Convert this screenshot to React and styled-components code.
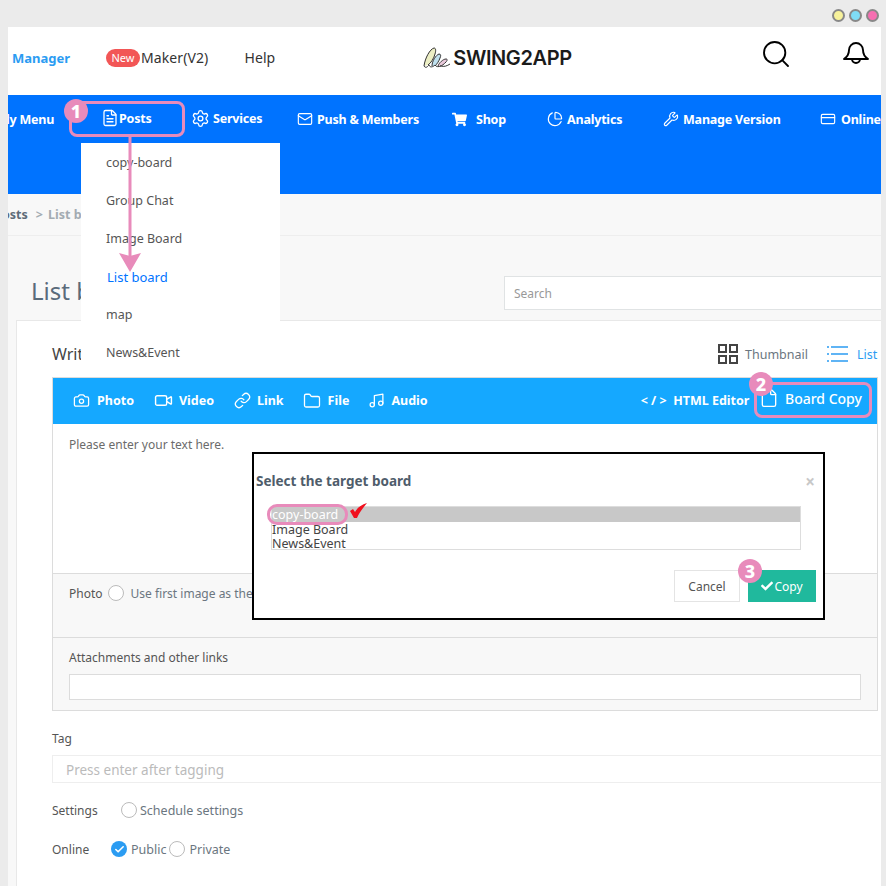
import styled, { createGlobalStyle } from "styled-components";
import {
  Search,
  FileText,
  Settings,
  Mail,
  PieChart,
  Wrench,
  CreditCard,
  Camera,
  Video,
  Link as LinkIcon,
  Folder,
  Music,
  Check,
  File,
} from "lucide-react";
import { FaCheck, FaShoppingCart } from "react-icons/fa";

const Global = createGlobalStyle`
  * { box-sizing: border-box; }
  html, body { margin: 0; padding: 0; background: #ebebeb; }
  body { font-family: "Noto Sans", "Open Sans", sans-serif; overflow: hidden; }
`;

const Frame = styled.div`
  position: relative;
  width: 886px;
  height: 886px;
  overflow: hidden;
  background: #ebebeb;
`;
const TitleBar = styled.div`
  height: 27px;
  display: flex;
  justify-content: flex-end;
  align-items: flex-start;
  gap: 4px;
  padding: 9px 7px 0 0;
`;
const Dot = styled.span`
  width: 13px;
  height: 13px;
  border-radius: 50%;
  border: 2px solid #888;
  background: ${(p) => p.$color};
`;
const Page = styled.div`
  margin: 0 5px 0 8px;
  height: 859px;
  background: #f8f8f8;
  overflow: hidden;
`;
const Header = styled.div`
  height: 68px;
  background: #fff;
  display: flex;
  align-items: center;
  padding: 0 0 7px 4px;
`;
const ManagerLink = styled.span`
  font-size: 13px;
  font-weight: 700;
  color: #2b9cf2;
  width: 94px;
`;
const NewBadge = styled.span`
  width: 34px;
  height: 18px;
  margin-right: 1px;
  border-radius: 9px;
  background: #f25656;
  color: #fff;
  font-size: 11px;
  display: flex;
  align-items: center;
  justify-content: center;
`;
const HeaderLink = styled.span`
  font-size: 14px;
  letter-spacing: 0.1px;
  color: #333;
  margin-left: ${(p) => p.$left || 0}px;
`;
const LogoWrap = styled.div`
  margin-left: 148px;
  display: flex;
  align-items: center;
  gap: 2px;
`;
const LogoText = styled.span`
  font-family: "Inter", sans-serif;
  font-size: 20px;
  font-weight: 600;
  letter-spacing: -0.4px;
  color: #1b1b1b;
`;
const HeaderIcons = styled.div`
  margin-left: auto;
  display: flex;
  align-items: center;
  gap: 51px;
  padding-right: 12px;
  margin-top: -7px;
  color: #000;
`;
const NavBar = styled.div`
  height: 99px;
  background: #0073ff;
  display: flex;
  align-items: flex-start;
  padding-top: 14px;
  overflow: hidden;
  white-space: nowrap;
`;
const NavItem = styled.div`
  display: flex;
  align-items: center;
  gap: ${(p) => p.$gap ?? 4}px;
  color: #fff;
  font-size: 12.5px;
  letter-spacing: -0.2px;
  font-weight: 700;
  flex: none;
  width: ${(p) => p.$width}px;
  margin-top: ${(p) => p.$top || 0}px;
  height: 20px;
  svg {
    margin-left: ${(p) => p.$iconLeft || 0}px;
  }
`;
const MenuCut = styled.span`
  margin-left: -2px;
`;
const Crumbs = styled.div`
  height: 42px;
  border-bottom: 1px solid #eeeeee;
  display: flex;
  align-items: center;
  font-size: 12.5px;
  font-weight: 700;
  color: #5d6b78;
  gap: 8px;
  padding-bottom: 1px;
  overflow: hidden;
`;
const CrumbCurrent = styled.span`
  color: #a3abb2;
  margin-left: ${(p) => p.$pull || 0}px;
`;
const CrumbFirst = styled.span`
  margin-left: -6px;
`;
const TitleRow = styled.div`
  height: 84px;
  display: flex;
  align-items: flex-start;
  padding: 40px 0 0 23px;
`;
const PageTitle = styled.h1`
  margin: 0;
  font-size: 24px;
  line-height: 30px;
  font-weight: 400;
  color: #5a6b7b;
  width: 473px;
`;
const SearchBox = styled.div`
  flex: 1;
  height: 34px;
  background: #fff;
  border: 1px solid #e0e3e4;
  border-right: none;
  font-size: 12px;
  color: #999;
  display: flex;
  align-items: center;
  padding-left: 9px;
`;
const Card = styled.div`
  margin-left: 8px;
  background: #fff;
  border: 1px solid #e8e8e8;
  border-right: none;
  height: 600px;
  padding: 0 0 0 35px;
`;
const WriteRow = styled.div`
  height: 56px;
  display: flex;
  align-items: center;
  padding-top: 10px;
`;
const WriteTitle = styled.span`
  font-size: 16px;
  color: #444;
  width: 666px;
`;
const ViewOption = styled.span`
  display: flex;
  align-items: center;
  gap: ${(p) => p.$gap || 7}px;
  font-size: 12.5px;
  color: ${(p) => p.$color};
  margin-right: ${(p) => p.$right || 0}px;
`;
const Editor = styled.div`
  width: 826px;
  border: 1px solid #dcdcdc;
  background: #f8f8f8;
`;
const Toolbar = styled.div`
  height: 46px;
  background: #15a8ff;
  display: flex;
  align-items: center;
  padding: 0 0 1px 20px;
  color: #fff;
  font-size: 12.5px;
  font-weight: 700;
`;
const ToolItem = styled.span`
  display: flex;
  align-items: center;
  gap: ${(p) => p.$gap || 7}px;
  margin-right: ${(p) => p.$right ?? 20}px;
`;
const TextArea = styled.div`
  height: 150px;
  background: #fff;
  padding: 12px 16px;
  font-size: 12px;
  color: #6b6b6b;
  border-bottom: 1px solid #dcdcdc;
`;
const PhotoRow = styled.div`
  height: 64px;
  display: flex;
  align-items: flex-start;
  padding: 11px 16px;
  font-size: 12px;
  color: #6b7680;
  border-bottom: 1px solid #dcdcdc;
  overflow: hidden;
`;
const PhotoLabel = styled.span`
  color: #555;
  margin-right: 5px;
`;
const Radio = styled.span`
  width: 16px;
  height: 16px;
  flex: none;
  border-radius: 50%;
  border: 1px solid #bbb;
  background: #fff;
  margin: ${(p) => p.$margin || "0"};
`;
const LinksBox = styled.div`
  height: 72px;
  padding: 11px 16px 0;
  font-size: 12px;
  color: #555;
`;
const LinksInput = styled.div`
  height: 26px;
  margin-top: 8px;
  background: #fff;
  border: 1px solid #dcdcdc;
`;
const TagLabel = styled.div`
  font-size: 12px;
  color: #555;
  margin-top: 19px;
`;
const TagInput = styled.div`
  height: 28px;
  margin-top: 8px;
  border: 1px solid #eeeeee;
  border-right: none;
  font-size: 13.5px;
  color: #bbb;
  display: flex;
  align-items: center;
  padding: 1px 0 0 13px;
`;
const OptionRow = styled.div`
  display: flex;
  align-items: center;
  font-size: 12.5px;
  color: #6b7680;
  height: 18px;
  margin-top: ${(p) => p.$top}px;
`;
const OptionLabel = styled.span`
  color: #555;
  font-size: 12px;
  width: ${(p) => p.$width}px;
`;
const CheckedRadio = styled.span`
  width: 16px;
  height: 16px;
  border-radius: 50%;
  background: #2b9cf2;
  color: #fff;
  display: flex;
  align-items: center;
  justify-content: center;
  margin-right: 4px;
`;

/* overlays: dropdown, tutorial marks and the modal */
const Dropdown = styled.div`
  position: absolute;
  left: 81px;
  top: 143px;
  width: 199px;
  height: 232px;
  background: #fff;
  padding: 0 25px;
`;
const DropItem = styled.div`
  height: 38px;
  display: flex;
  align-items: center;
  font-size: ${(p) => (p.$active ? 13 : 12.5)}px;
  color: ${(p) => (p.$active ? "#0073ff" : "#555")};
  padding: ${(p) => (p.$active ? "2px 0 0 1px" : "0")};
`;
const HighlightBox = styled.div`
  position: absolute;
  left: ${(p) => p.$x}px;
  top: ${(p) => p.$y}px;
  width: ${(p) => p.$w}px;
  height: ${(p) => p.$h}px;
  border: 3px solid #e88bbb;
  border-radius: ${(p) => p.$r || 8}px;
`;
const StepMark = styled.div`
  position: absolute;
  left: ${(p) => p.$x}px;
  top: ${(p) => p.$y}px;
  width: 24px;
  height: 24px;
  border-radius: 50%;
  background: #e88bbb;
  color: #fff;
  font-size: 18px;
  font-weight: 800;
  display: flex;
  align-items: center;
  justify-content: center;
`;
const ArrowSvg = styled.svg`
  position: absolute;
  left: 118px;
  top: 135px;
`;
const Modal = styled.div`
  position: absolute;
  left: 252px;
  top: 452px;
  width: 573px;
  height: 168px;
  background: #fff;
  border: 2px solid #000;
  padding: 0 7px 0 2px;
`;
const ModalHead = styled.div`
  height: 54px;
  display: flex;
  align-items: center;
  justify-content: space-between;
  font-size: 13.5px;
  font-weight: 700;
  color: #4f5d6b;
`;
const CloseMark = styled.span`
  color: #c8c8c8;
  font-size: 17px;
  margin-right: 1px;
`;
const ListBox = styled.div`
  margin: -2px 0 0 15px;
  width: 530px;
  height: 44px;
  border: 1px solid #ddd;
  font-size: 12.5px;
  line-height: 16px;
  color: #444;
`;
const ListOption = styled.div`
  height: 14.5px;
  background: ${(p) => (p.$selected ? "#c8c8c8" : "transparent")};
  color: ${(p) => (p.$selected ? "#fff" : "#444")};
`;
const ModalFoot = styled.div`
  display: flex;
  justify-content: flex-end;
  gap: 8px;
  margin-top: 20px;
`;
const CancelBtn = styled.div`
  width: 66px;
  height: 32px;
  border: 1px solid #e4e4e4;
  display: flex;
  align-items: center;
  justify-content: center;
  font-size: 12px;
  color: #555;
`;
const CopyBtn = styled.div`
  width: 68px;
  height: 32px;
  background: #20b99d;
  color: #fff;
  font-size: 12px;
  gap: 1px;
  display: flex;
  align-items: center;
  justify-content: center;
`;
const CheckMark = styled.svg`
  position: absolute;
  left: 349px;
  top: 503px;
`;
const BoardCopyLabel = styled.div`
  position: absolute;
  left: 759px;
  top: 388px;
  display: flex;
  align-items: center;
  gap: 6px;
  color: #fff;
  font-size: 14px;
  font-weight: 500;
`;

const navItems = [
  { label: "Posts", Icon: FileText, width: 89, top: -1, size: 18, gap: 0, iconLeft: -2 },
  { label: "Services", Icon: Settings, width: 105, top: -1, size: 19, gap: 3, iconLeft: -1 },
  { label: "Push & Members", Icon: Mail, width: 155, size: 16 },
  { label: "Shop", Icon: FaShoppingCart, width: 95, gap: 9, size: 15 },
  { label: "Analytics", Icon: PieChart, width: 116, size: 16 },
  { label: "Manage Version", Icon: Wrench, width: 157, size: 16 },
  { label: "Online", Icon: CreditCard, width: 70, size: 16, gap: 5 },
];

const boards = ["copy-board", "Group Chat", "Image Board", "List board", "map", "News&Event"];

const App = () => {
  return (
    <Frame>
      <Global />
      <TitleBar>
        <Dot $color="#f7f29b" />
        <Dot $color="#7fdcf5" />
        <Dot $color="#f56fb1" />
      </TitleBar>
      <Page>
        <Header>
          <ManagerLink>Manager</ManagerLink>
          <NewBadge>New</NewBadge>
          <HeaderLink>Maker(V2)</HeaderLink>
          <HeaderLink $left={36}>Help</HeaderLink>
          <LogoWrap>
            <svg width="28" height="24" viewBox="0 0 28 24">
              <path d="M1 20C2 12 7 3 11 2c2 0 2 3 1 6-1 4-4 9-7 11" fill="#eceec4" stroke="#333" strokeWidth="1" />
              <path d="M9 20c0-5 4-11 7-12 2 0 2 2 1 4-1 3-3 6-5 8" fill="#bfe0ee" stroke="#333" strokeWidth="1" />
              <path d="M15 20c1-3 5-7 8-7 2 0 1 2 0 3-2 2-4 4-6 4" fill="#e8c8da" stroke="#333" strokeWidth="1" />
              <path d="M1 20c2 3 4 0 5-1 1 3 4 2 6 0 1 2 4 2 6 1 3 1 6 0 9-2" fill="none" stroke="#333" strokeWidth="1" />
            </svg>
            <LogoText>SWING2APP</LogoText>
          </LogoWrap>
          <HeaderIcons>
            <Search size={32} strokeWidth={1.4} />
            <svg width="26" height="26" viewBox="0 0 26 26" fill="none" stroke="#000" strokeWidth="1.9">
              <path d="M1 18c3-2 5-4 5-9a7 7 0 0 1 14 0c0 5 2 7 5 9Z" strokeLinejoin="round" />
              <path d="M9 18a4 4 0 0 0 8 0" />
            </svg>
          </HeaderIcons>
        </Header>
        <NavBar>
          <NavItem $width={95}>
            <MenuCut>ly Menu</MenuCut>
          </NavItem>
          {navItems.map(({ label, Icon, width, top, gap, size, iconLeft }) => (
            <NavItem key={label} $width={width} $top={top} $gap={gap} $iconLeft={iconLeft}>
              <Icon size={size} strokeWidth={1.7} />
              {label}
            </NavItem>
          ))}
        </NavBar>
        <Crumbs>
          <CrumbFirst>osts</CrumbFirst>
          <CrumbCurrent>&gt;</CrumbCurrent>
          <CrumbCurrent $pull={-3}>List board</CrumbCurrent>
        </Crumbs>
        <TitleRow>
          <PageTitle>List board</PageTitle>
          <SearchBox>Search</SearchBox>
        </TitleRow>
        <Card>
          <WriteRow>
            <WriteTitle>Write</WriteTitle>
            <ViewOption $color="#6b7680" $right={19}>
              <svg width="20" height="20" viewBox="0 0 20 20" fill="none" stroke="#444" strokeWidth="2">
                <rect x="1" y="1" width="7" height="7" />
                <rect x="12" y="1" width="7" height="7" />
                <rect x="1" y="12" width="7" height="7" />
                <rect x="12" y="12" width="7" height="7" />
              </svg>
              Thumbnail
            </ViewOption>
            <ViewOption $color="#2b9cf2" $gap={9}>
              <svg width="21" height="18" viewBox="0 0 21 18" stroke="#2b9cf2" strokeWidth="1.4">
                <path d="M4 2h17M4 9h17M4 16h17" />
                <path d="M0 2h2M0 9h2M0 16h2" />
              </svg>
              List
            </ViewOption>
          </WriteRow>
          <Editor>
            <Toolbar>
              <ToolItem><Camera size={17} strokeWidth={1.8} />Photo</ToolItem>
              <ToolItem $gap={6}><Video size={19} strokeWidth={1.8} />Video</ToolItem>
              <ToolItem $right={19} $gap={6}><LinkIcon size={17} strokeWidth={1.8} />Link</ToolItem>
              <ToolItem $right={19}><Folder size={18} strokeWidth={1.7} />File</ToolItem>
              <ToolItem $right={213} $gap={6}><Music size={17} strokeWidth={1.8} />Audio</ToolItem>
              <ToolItem $right={0}>&lt; / &gt;&nbsp; HTML Editor</ToolItem>
            </Toolbar>
            <TextArea>Please enter your text here.</TextArea>
            <PhotoRow>
              <PhotoLabel>Photo</PhotoLabel>
              <Radio $margin="0 7px 0 0" />
              Use first image as the thumbnail
            </PhotoRow>
            <LinksBox>
              Attachments and other links
              <LinksInput />
            </LinksBox>
          </Editor>
          <TagLabel>Tag</TagLabel>
          <TagInput>Press enter after tagging</TagInput>
          <OptionRow $top={18}>
            <OptionLabel $width={69}>Settings</OptionLabel>
            <Radio $margin="0 3px 0 0" />
            Schedule settings
          </OptionRow>
          <OptionRow $top={21}>
            <OptionLabel $width={59}>Online</OptionLabel>
            <CheckedRadio><Check size={11} strokeWidth={3.5} /></CheckedRadio>
            Public
            <Radio $margin="0 4px 0 3px" />
            Private
          </OptionRow>
        </Card>
      </Page>

      <Dropdown>
        {boards.map((b) => (
          <DropItem key={b} $active={b === "List board"}>{b}</DropItem>
        ))}
      </Dropdown>
      <HighlightBox $x={69} $y={101} $w={116} $h={36} />
      <StepMark $x={64} $y={99}>1</StepMark>
      <ArrowSvg width="24" height="140" viewBox="0 0 24 140">
        <path d="M12 0V122" stroke="#e88bbb" strokeWidth="3" />
        <path d="M1 118L12 121L23 118L12 137Z" fill="#e88bbb" />
      </ArrowSvg>
      <HighlightBox $x={754} $y={382} $w={118} $h={36} />
      <BoardCopyLabel><File size={20} strokeWidth={1.6} />Board Copy</BoardCopyLabel>
      <StepMark $x={749} $y={372}>2</StepMark>

      <Modal>
        <ModalHead>
          Select the target board
          <CloseMark>×</CloseMark>
        </ModalHead>
        <ListBox>
          <ListOption $selected>copy-board</ListOption>
          <ListOption>Image Board</ListOption>
          <ListOption>News&amp;Event</ListOption>
        </ListBox>
        <ModalFoot>
          <CancelBtn>Cancel</CancelBtn>
          <CopyBtn><FaCheck size={12} />Copy</CopyBtn>
        </ModalFoot>
      </Modal>
      <HighlightBox $x={267} $y={504} $w={81} $h={21} $r={10} />
      <CheckMark width="18" height="16" viewBox="0 0 18 16">
        <path d="M1 8l3-2 2 3C8 5 12 2 18 0 14 5 10 10 8 15H5Z" fill="#f0101e" />
      </CheckMark>
      <StepMark $x={738} $y={559}>3</StepMark>
    </Frame>
  );
};

export default App;
